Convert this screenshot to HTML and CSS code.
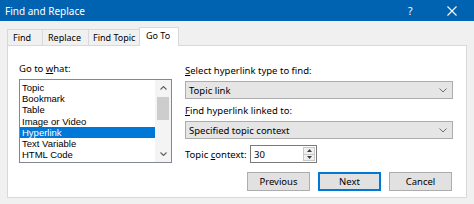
FILE: index.html
```html
<!DOCTYPE html>
<html>
<head>
<meta charset="utf-8">
<link rel="stylesheet" href="styles.css">
</head>
<body>
<div class="window">
  <div class="titlebar">
    <span class="title">Find and Replace</span>
    <span class="help">?</span>
    <span class="close">
      <svg width="10" height="10" viewBox="0 0 10 10"><path d="M0.5 0.5 L9.5 9.5 M9.5 0.5 L0.5 9.5" stroke="#fff" stroke-width="1.1" fill="none"/></svg>
    </span>
  </div>
  <div class="tabs">
    <div class="tab tab-find">Find</div>
    <div class="tab tab-replace">Replace</div>
    <div class="tab tab-topic">Find Topic</div>
    <div class="tab tab-goto active">Go To</div>
  </div>
  <div class="panel">
    <div class="left">
      <div class="label">Go to <u>w</u>hat:</div>
      <div class="listbox">
        <ul class="items">
          <li>Topic</li>
          <li>Bookmark</li>
          <li>Table</li>
          <li>Image or Video</li>
          <li class="selected">Hyperlink</li>
          <li>Text Variable</li>
          <li>HTML Code</li>
        </ul>
        <div class="scrollbar">
          <div class="sb-arrow">
            <svg width="7" height="4" viewBox="0 0 7 4"><path d="M0.5 3.5 L3.5 0.5 L6.5 3.5" stroke="#606060" stroke-width="1.1" fill="none"/></svg>
          </div>
          <div class="sb-track"><div class="sb-thumb"></div></div>
          <div class="sb-arrow">
            <svg width="7" height="4" viewBox="0 0 7 4"><path d="M0.5 0.5 L3.5 3.5 L6.5 0.5" stroke="#606060" stroke-width="1.1" fill="none"/></svg>
          </div>
        </div>
      </div>
    </div>
    <div class="right">
      <div class="label label-1"><u>S</u>elect hyperlink type to find:</div>
      <div class="combo">
        <span>Topic link</span>
        <svg width="8" height="5" viewBox="0 0 8 5"><path d="M0.5 0.5 L4 4 L7.5 0.5" stroke="#707070" stroke-width="1" fill="none"/></svg>
      </div>
      <div class="label label-2"><u>F</u>ind hyperlink linked to:</div>
      <div class="combo">
        <span>Specified topic context</span>
        <svg width="8" height="5" viewBox="0 0 8 5"><path d="M0.5 0.5 L4 4 L7.5 0.5" stroke="#707070" stroke-width="1" fill="none"/></svg>
      </div>
      <div class="ctx-row">
        <span class="ctx-label">Topic <u>c</u>ontext:</span>
        <div class="spin">
          <span class="spin-value">30</span>
          <div class="spin-btns">
            <div class="spin-btn"><svg width="5" height="3" viewBox="0 0 5 3"><path d="M0 3 L2.5 0 L5 3 Z" fill="#404040"/></svg></div>
            <div class="spin-btn"><svg width="5" height="3" viewBox="0 0 5 3"><path d="M0 0 L2.5 3 L5 0 Z" fill="#404040"/></svg></div>
          </div>
        </div>
      </div>
      <div class="buttons">
        <div class="btn">Previous</div>
        <div class="btn default">Next</div>
        <div class="btn">Cancel</div>
      </div>
    </div>
  </div>
</div>
</body>
</html>
```
FILE: styles.css
```css
html, body {
  margin: 0;
  padding: 0;
  background: #f0f0f0;
}
body {
  width: 474px;
  height: 204px;
  overflow: hidden;
  font-family: "Noto Sans", "Open Sans", sans-serif;
  font-size: 9.5px;
  color: #000;
}
.window {
  width: 474px;
  height: 204px;
  display: flex;
  flex-direction: column;
}
.titlebar {
  height: 21px;
  background: #0063b1;
  color: #fff;
  display: flex;
  align-items: center;
}
.title {
  padding-left: 5px;
  font-size: 10px;
  flex: 1;
}
.help {
  font-size: 10.5px;
  width: 10px;
  margin-right: 29px;
}
.close {
  display: flex;
  margin-right: 17px;
}
.tabs {
  height: 24px;
  display: flex;
  align-items: flex-end;
  padding-left: 7px;
  font-size: 9px;
}
.tab {
  box-sizing: border-box;
  height: 16px;
  border: 1px solid #d9d9d9;
  border-bottom: none;
  margin-left: -1px;
  padding-left: 5px;
  line-height: 15px;
  background: #f0f0f0;
  white-space: nowrap;
  overflow: hidden;
}
.tab-find { width: 36px; margin-left: 0; }
.tab-replace { width: 47px; }
.tab-topic { width: 52px; padding-left: 4px; }
.tab-goto { width: 40px; }
.tab.active {
  height: 19px;
  background: #fff;
  margin-bottom: -1px;
  position: relative;
  z-index: 1;
  padding-left: 6px;
  line-height: 16px;
}
.panel {
  box-sizing: border-box;
  margin-left: 7px;
  width: 460px;
  height: 153px;
  background: #fff;
  border: 1px solid #d9d9d9;
  display: flex;
  padding: 0 0 0 11px;
}
.left {
  width: 153px;
  padding-top: 17px;
}
.label {
  line-height: 12px;
  height: 12px;
  white-space: nowrap;
}
.listbox {
  box-sizing: border-box;
  margin-top: 4px;
  width: 153px;
  height: 84px;
  border: 1px solid #828790;
  display: flex;
}
.items {
  list-style: none;
  margin: 0;
  padding: 2px 0 0 0;
  flex: 1;
  font-family: "Liberation Sans", Arial, sans-serif;
  font-size: 9.5px;
}
.items li {
  height: 11.2px;
  line-height: 11.2px;
  padding-left: 2px;
  white-space: nowrap;
}
.items li.selected {
  background: #0078d7;
  color: #fff;
}
.scrollbar {
  width: 16px;
  background: #f4f4f4;
  display: flex;
  flex-direction: column;
}
.sb-arrow {
  height: 16px;
  display: flex;
  align-items: center;
  justify-content: center;
}
.sb-track {
  flex: 1;
  padding: 1px 2px;
}
.sb-thumb {
  height: 23px;
  background: #cdcdcd;
}
.right {
  margin-left: 13px;
  width: 268px;
  padding-top: 19px;
  display: flex;
  flex-direction: column;
}
.combo {
  box-sizing: border-box;
  margin-top: 4px;
  height: 18px;
  background: #e5e5e5;
  border: 1px solid #acacac;
  display: flex;
  align-items: center;
  justify-content: space-between;
  padding: 0 5px 0 3px;
}
.label-2 {
  margin-top: 6px;
}
.ctx-row {
  margin-top: 6px;
  display: flex;
  align-items: center;
  height: 18px;
}
.ctx-label {
  width: 65px;
}
.spin {
  box-sizing: border-box;
  width: 67px;
  height: 18px;
  border: 1px solid #7a7a7a;
  display: flex;
  align-items: center;
  justify-content: space-between;
  padding: 0 1px 0 3px;
}
.spin-btns {
  display: flex;
  flex-direction: column;
  width: 12px;
  height: 14px;
}
.spin-btn {
  box-sizing: border-box;
  flex: 1;
  border: 1px solid #c8c8c8;
  background: #f0f0f0;
  display: flex;
  align-items: center;
  justify-content: center;
}
.spin-btn + .spin-btn {
  border-top: none;
}
.buttons {
  margin-top: 9px;
  display: flex;
  justify-content: flex-end;
  gap: 8px;
  padding-right: 1px;
}
.btn {
  box-sizing: border-box;
  width: 63px;
  height: 19px;
  background: #e1e1e1;
  border: 1px solid #adadad;
  display: flex;
  align-items: center;
  justify-content: center;
}
.btn.default {
  border: 2px solid #0078d7;
}
```
